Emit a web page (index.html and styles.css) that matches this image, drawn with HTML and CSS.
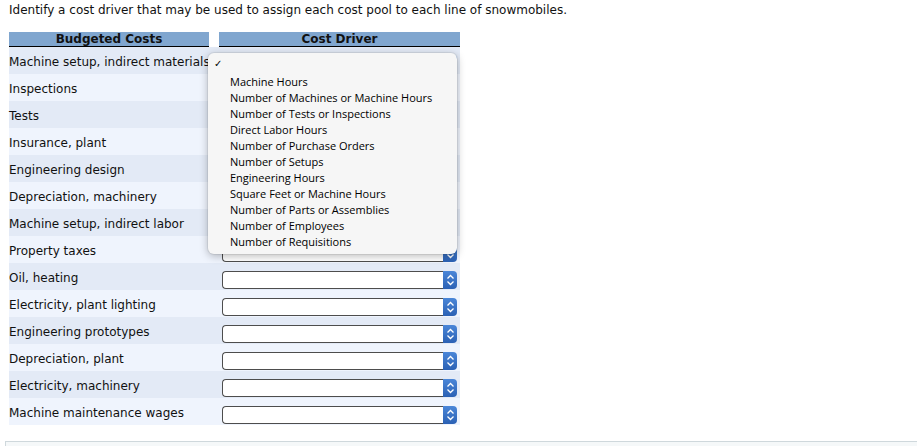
FILE: index.html
```html
<!DOCTYPE html>
<html lang="en">
<head>
    <meta charset="UTF-8">
    <title>Cost Drivers</title>
    <link rel="stylesheet" href="styles.css">
</head>
<body>
    <p class="question">Identify a cost driver that may be used to assign each cost pool to each line of snowmobiles.</p>

    <div class="grid-wrap">
        <div class="head-row">
            <div class="head-cell head-costs">Budgeted Costs</div>
            <div class="head-cell head-driver">Cost Driver</div>
        </div>

        <div class="row odd"><span class="label">Machine setup, indirect materials</span><div class="picker"><span class="field"></span><span class="btn"><svg width="9" height="12" viewBox="0 0 9 12"><path d="M1.5 4.5 L4.5 1.5 L7.5 4.5 M1.5 7.5 L4.5 10.5 L7.5 7.5" fill="none" stroke="#fff" stroke-width="1.3"/></svg></span></div></div>
        <div class="row"><span class="label">Inspections</span><div class="picker"><span class="field"></span><span class="btn"><svg width="9" height="12" viewBox="0 0 9 12"><path d="M1.5 4.5 L4.5 1.5 L7.5 4.5 M1.5 7.5 L4.5 10.5 L7.5 7.5" fill="none" stroke="#fff" stroke-width="1.3"/></svg></span></div></div>
        <div class="row odd"><span class="label">Tests</span><div class="picker"><span class="field"></span><span class="btn"><svg width="9" height="12" viewBox="0 0 9 12"><path d="M1.5 4.5 L4.5 1.5 L7.5 4.5 M1.5 7.5 L4.5 10.5 L7.5 7.5" fill="none" stroke="#fff" stroke-width="1.3"/></svg></span></div></div>
        <div class="row"><span class="label">Insurance, plant</span><div class="picker"><span class="field"></span><span class="btn"><svg width="9" height="12" viewBox="0 0 9 12"><path d="M1.5 4.5 L4.5 1.5 L7.5 4.5 M1.5 7.5 L4.5 10.5 L7.5 7.5" fill="none" stroke="#fff" stroke-width="1.3"/></svg></span></div></div>
        <div class="row odd"><span class="label">Engineering design</span><div class="picker"><span class="field"></span><span class="btn"><svg width="9" height="12" viewBox="0 0 9 12"><path d="M1.5 4.5 L4.5 1.5 L7.5 4.5 M1.5 7.5 L4.5 10.5 L7.5 7.5" fill="none" stroke="#fff" stroke-width="1.3"/></svg></span></div></div>
        <div class="row"><span class="label">Depreciation, machinery</span><div class="picker"><span class="field"></span><span class="btn"><svg width="9" height="12" viewBox="0 0 9 12"><path d="M1.5 4.5 L4.5 1.5 L7.5 4.5 M1.5 7.5 L4.5 10.5 L7.5 7.5" fill="none" stroke="#fff" stroke-width="1.3"/></svg></span></div></div>
        <div class="row odd"><span class="label">Machine setup, indirect labor</span><div class="picker"><span class="field"></span><span class="btn"><svg width="9" height="12" viewBox="0 0 9 12"><path d="M1.5 4.5 L4.5 1.5 L7.5 4.5 M1.5 7.5 L4.5 10.5 L7.5 7.5" fill="none" stroke="#fff" stroke-width="1.3"/></svg></span></div></div>
        <div class="row"><span class="label">Property taxes</span><div class="picker"><span class="field"></span><span class="btn"><svg width="9" height="12" viewBox="0 0 9 12"><path d="M1.5 4.5 L4.5 1.5 L7.5 4.5 M1.5 7.5 L4.5 10.5 L7.5 7.5" fill="none" stroke="#fff" stroke-width="1.3"/></svg></span></div></div>
        <div class="row odd"><span class="label">Oil, heating</span><div class="picker"><span class="field"></span><span class="btn"><svg width="9" height="12" viewBox="0 0 9 12"><path d="M1.5 4.5 L4.5 1.5 L7.5 4.5 M1.5 7.5 L4.5 10.5 L7.5 7.5" fill="none" stroke="#fff" stroke-width="1.3"/></svg></span></div></div>
        <div class="row"><span class="label">Electricity, plant lighting</span><div class="picker"><span class="field"></span><span class="btn"><svg width="9" height="12" viewBox="0 0 9 12"><path d="M1.5 4.5 L4.5 1.5 L7.5 4.5 M1.5 7.5 L4.5 10.5 L7.5 7.5" fill="none" stroke="#fff" stroke-width="1.3"/></svg></span></div></div>
        <div class="row odd"><span class="label">Engineering prototypes</span><div class="picker"><span class="field"></span><span class="btn"><svg width="9" height="12" viewBox="0 0 9 12"><path d="M1.5 4.5 L4.5 1.5 L7.5 4.5 M1.5 7.5 L4.5 10.5 L7.5 7.5" fill="none" stroke="#fff" stroke-width="1.3"/></svg></span></div></div>
        <div class="row"><span class="label">Depreciation, plant</span><div class="picker"><span class="field"></span><span class="btn"><svg width="9" height="12" viewBox="0 0 9 12"><path d="M1.5 4.5 L4.5 1.5 L7.5 4.5 M1.5 7.5 L4.5 10.5 L7.5 7.5" fill="none" stroke="#fff" stroke-width="1.3"/></svg></span></div></div>
        <div class="row odd"><span class="label">Electricity, machinery</span><div class="picker"><span class="field"></span><span class="btn"><svg width="9" height="12" viewBox="0 0 9 12"><path d="M1.5 4.5 L4.5 1.5 L7.5 4.5 M1.5 7.5 L4.5 10.5 L7.5 7.5" fill="none" stroke="#fff" stroke-width="1.3"/></svg></span></div></div>
        <div class="row"><span class="label">Machine maintenance wages</span><div class="picker"><span class="field"></span><span class="btn"><svg width="9" height="12" viewBox="0 0 9 12"><path d="M1.5 4.5 L4.5 1.5 L7.5 4.5 M1.5 7.5 L4.5 10.5 L7.5 7.5" fill="none" stroke="#fff" stroke-width="1.3"/></svg></span></div></div>

        <!-- open option list of the first select -->
        <div class="menu">
            <div class="menu-check">✓</div>
            <ul class="menu-list">
                <li>Machine Hours</li>
                <li>Number of Machines or Machine Hours</li>
                <li>Number of Tests or Inspections</li>
                <li>Direct Labor Hours</li>
                <li>Number of Purchase Orders</li>
                <li>Number of Setups</li>
                <li>Engineering Hours</li>
                <li>Square Feet or Machine Hours</li>
                <li>Number of Parts or Assemblies</li>
                <li>Number of Employees</li>
                <li>Number of Requisitions</li>
            </ul>
        </div>
    </div>

    <div class="footer-box"></div>
</body>
</html>
```

FILE: styles.css
```css
* { margin: 0; padding: 0; box-sizing: border-box; }
body {
    font-family: 'DejaVu Sans', Verdana, sans-serif;
    font-size: 12px;
    color: #111;
    background: #fff;
    overflow: hidden;
}
.question {
    padding: 2px 0 0 9px;
    line-height: 16px;
    height: 32px;
}
.grid-wrap {
    position: relative;
    margin-left: 9px;
    width: 451px;
}
.head-row {
    display: flex;
    gap: 10px;
}
.head-cell {
    background: #80a6cf;
    border-bottom: 1px solid #000;
    font-weight: bold;
    font-size: 12px;
    text-align: center;
    line-height: 14px;
    height: 15px;
}
.head-costs { width: 200px; }
.head-driver { flex: 1; }
.row {
    display: flex;
    height: 27px;
    background: #eff4fd;
}
.row.odd { background: #e3eaf6; }
.label {
    width: 213px;
    padding-top: 1px;
    line-height: 28px;
    white-space: nowrap;
}
.picker {
    display: flex;
    width: 235px;
    height: 18px;
    align-self: flex-end;
    margin-bottom: 1px;
    border-radius: 4px;
}
.field {
    flex: 1;
    background: #fff;
    border: 1px solid #4d4d4d;
    border-right: none;
    border-radius: 4px 0 0 4px;
}
.btn {
    width: 14px;
    background: linear-gradient(#4a86d8, #2b61b4);
    border-radius: 0 4px 4px 0;
    display: flex;
    align-items: center;
    justify-content: center;
}
.menu {
    position: absolute;
    left: 199px;
    top: 21px;
    width: 249px;
    height: 201px;
    background: #f6f6f6;
    border-radius: 6px;
    box-shadow: 0 2px 8px rgba(0, 0, 0, 0.28), 0 0 0 1px rgba(0, 0, 0, 0.06);
    font-family: 'Open Sans', 'DejaVu Sans', sans-serif;
    font-size: 11px;
    color: #000;
}
.menu-check {
    height: 16px;
    line-height: 16px;
    padding-left: 6px;
    margin-top: 2px;
    font-size: 10px;
}
.menu-list {
    list-style: none;
    margin-top: 3px;
}
.menu-list li {
    height: 16px;
    line-height: 16px;
    padding-left: 22px;
    white-space: nowrap;
}
.footer-box {
    margin: 16px 0 0 5px;
    height: 5px;
    border: 1px solid #cfd8dc;
    border-right: none;
    border-bottom: none;
    background: #f5f8f9;
}
```
